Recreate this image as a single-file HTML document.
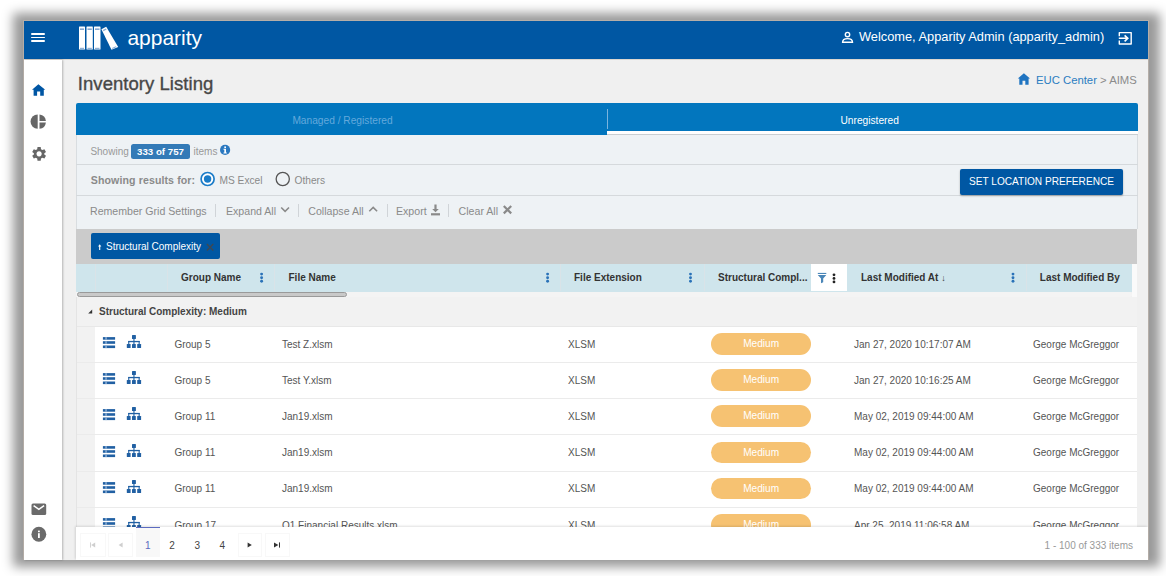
<!DOCTYPE html>
<html><head><meta charset="utf-8">
<style>
*{box-sizing:border-box;margin:0;padding:0}
html,body{width:1166px;height:576px;overflow:hidden;background:#fff;font-family:"Liberation Sans",sans-serif;}
.a{position:absolute}
.t{position:absolute;white-space:nowrap;line-height:1}
.shd{left:12.5px;top:13px;width:1147px;height:554px;background:rgba(0,0,0,0.4);filter:blur(5.5px)}
.win{left:23px;top:20px;width:1126px;height:540px;background:#f0f0f0;border:1px solid #b5aea8;border-bottom:none}
.hdr{left:24px;top:21px;width:1124px;height:38px;background:#0057a3;box-shadow:0 1px 0 #dcd6d0}
.side{left:24px;top:60px;width:38px;height:500px;background:#fff;box-shadow:1px 0 2px rgba(0,0,0,0.25)}
.tabs{left:76px;top:103px;width:1062px;height:32px;background:#0276be}
.panel{left:76px;top:135px;width:1062px;height:94px;background:#eef2f5;border-left:1px solid #d9dde0;border-right:1px solid #d9dde0}
.hline{position:absolute;height:1px;background:#d5d9dc}
.vsep{position:absolute;width:1px;height:13px;top:204px;background:#d0d4d8}
.tb{font-size:10.6px;color:#8a8a8a;top:206px}
.grp{left:76px;top:229px;width:1061px;height:35px;background:#cbcbcb}
.colh{left:76px;top:264px;width:1056px;height:27.8px;background:#cfe5ec}
.csep{position:absolute;top:264px;width:1px;height:27px;background:#d9e3e8}
.hd{top:273px;font-size:10px;font-weight:bold;color:#333}
.keb{position:absolute;top:273px;width:3px;height:10px}
.keb i{position:absolute;left:0;width:3px;height:3px;border-radius:50%;background:#2f7bc1}
.rt{font-size:10px;color:#555}
.badge{position:absolute;width:100.2px;height:21.5px;border-radius:11px;background:#f6c272;color:#fff;font-size:10.1px;text-align:center;line-height:21.5px}
</style></head><body>
<div class="a shd"></div>
<div class="a win"></div>
<div class="a hdr"></div>
<div class="a side"></div>
<!-- header -->
<div class="a" style="left:31.2px;top:33.4px;width:13.6px;height:1.7px;background:#fff;border-radius:1px"></div>
<div class="a" style="left:31.2px;top:36.7px;width:13.6px;height:1.7px;background:#fff;border-radius:1px"></div>
<div class="a" style="left:31.2px;top:40.2px;width:13.6px;height:1.7px;background:#fff;border-radius:1px"></div>
<svg class="a" style="left:0;top:0" width="1166" height="60" viewBox="0 0 1166 60">
 <g fill="#fff">
  <rect x="79" y="26.6" width="6" height="23" rx="0.5"/>
  <rect x="86.5" y="26.6" width="6.3" height="23" rx="0.5"/>
  <rect x="94" y="26.6" width="6.5" height="23" rx="0.5"/>
  <polygon points="101.4,29.3 106.2,26.7 118.2,47.1 111.5,49.7"/>
 </g>
 <g fill="#86aad3">
  <rect x="80" y="28.4" width="4" height="1.6"/><rect x="87.5" y="28.4" width="4.3" height="1.6"/><rect x="95" y="28.4" width="4.5" height="1.6"/>
  <rect x="80" y="47.8" width="4" height="1.1"/><rect x="87.5" y="47.8" width="4.3" height="1.1"/><rect x="95" y="47.8" width="4.5" height="1.1"/>
  <polygon points="102.8,30.1 105.9,28.5 106.6,29.6 103.5,31.2"/>
  <polygon points="112,48 115.9,46.2 116.4,47.1 112.5,48.9"/>
 </g>
 <g fill="none" stroke="#fff" stroke-width="1.4">
  <circle cx="847.5" cy="34.6" r="2.2"/>
  <path d="M842.6,42.2 L852.5,42.2 C852.5,40 850.5,38.6 847.55,38.6 C844.6,38.6 842.6,40 842.6,42.2 Z"/>
  <path d="M1119.3,36.3 V32.6 H1131.2 V44 H1119.3 V40.4" stroke-linejoin="round"/>
  <path d="M1118.8,38.3 H1127.6 M1124.6,35.3 L1127.8,38.3 L1124.6,41.3" stroke-width="1.6"/>
 </g>
</svg>
<div class="t" style="left:127.4px;top:27px;font-size:21px;color:#fff">apparity</div>
<div class="t" style="left:859px;top:31px;font-size:12.8px;color:#fff">Welcome, Apparity Admin (apparity_admin)</div>
<!-- sidebar icons -->
<svg class="a" style="left:0;top:60px" width="62" height="500" viewBox="0 60 62 500">
 <path d="M38.4,84.2 L45.2,89.8 L43.8,89.8 L43.8,95.8 L40.2,95.8 L40.2,91.5 L37.1,91.5 L37.1,95.8 L33.6,95.8 L33.6,89.8 L32,89.8 Z" fill="#0056a4"/>
 <g fill="#666">
  <path d="M37.7,114.5 A7.15,7.15 0 0 0 37.7,128.8 Z"/>
  <path d="M39.5,114.6 A7.15,7.15 0 0 1 45.9,121.1 L39.5,121.1 Z"/>
  <path d="M39.5,122.4 L45.9,122.4 A7.15,7.15 0 0 1 39.5,128.7 Z"/>
 </g>
 <g transform="translate(39.1,153.9)" fill="#666">
  <path id="gear" fill-rule="evenodd" d="M-1.6,-6.8 L1.6,-6.8 L1.9,-4.6 L3.3,-3.8 L5.3,-4.7 L6.9,-1.9 L5.2,-0.6 L5.2,0.6 L6.9,1.9 L5.3,4.7 L3.3,3.8 L1.9,4.6 L1.6,6.8 L-1.6,6.8 L-1.9,4.6 L-3.3,3.8 L-5.3,4.7 L-6.9,1.9 L-5.2,0.6 L-5.2,-0.6 L-6.9,-1.9 L-5.3,-4.7 L-3.3,-3.8 L-1.9,-4.6 Z M0,-2.6 A2.6,2.6 0 1 0 0.01,-2.6 Z"/>
 </g>
 <rect x="31.5" y="503.4" width="14.7" height="11.7" rx="1.5" fill="#6a6a6a"/>
 <path d="M33.6,505.6 L38.85,509.3 L44.1,505.6" fill="none" stroke="#fff" stroke-width="1.5"/>
 <circle cx="38.85" cy="534.25" r="7.4" fill="#6a6a6a"/>
 <rect x="38" y="530.6" width="1.8" height="1.6" fill="#fff"/>
 <rect x="38" y="533.2" width="1.8" height="4.8" fill="#fff"/>
</svg>

<!-- title & breadcrumb -->
<div class="t" style="left:77.8px;top:75px;font-size:18.5px;color:#474747;-webkit-text-stroke:0.35px #474747;letter-spacing:0.05px">Inventory Listing</div>
<svg class="a" style="left:1016px;top:72px" width="16" height="14" viewBox="1016 72 16 14">
 <path d="M1023.9,73.3 L1030,78.6 L1028.6,78.6 L1028.6,84.7 L1025.3,84.7 L1025.3,80.8 L1022.5,80.8 L1022.5,84.7 L1019.3,84.7 L1019.3,78.6 L1017.8,78.6 Z" fill="#1f74c1"/>
</svg>
<div class="t" style="left:1036px;top:74.9px;font-size:11.3px;color:#2b7dc1">EUC Center <span style="color:#8b8b8b">&gt; AIMS</span></div>
<!-- tabs -->
<div class="a tabs" style="border-radius:2px 2px 0 0"></div>
<div class="a" style="left:606.5px;top:108.6px;width:1px;height:20px;background:#7ab4de"></div>
<div class="a" style="left:607px;top:131.2px;width:531px;height:3.2px;background:#fff"></div><div class="a" style="left:607px;top:134.4px;width:531px;height:0.8px;background:#c9ced2"></div>
<div class="t" style="left:77px;width:531px;text-align:center;top:116.1px;font-size:10.2px;color:#62a9dc">Managed / Registered</div>
<div class="t" style="left:604.2px;width:531px;text-align:center;top:115.9px;font-size:10.2px;color:#fff">Unregistered</div>
<!-- panel -->
<div class="a panel"></div>
<div class="hline" style="left:76px;top:164.2px;width:1062px"></div>
<div class="hline" style="left:76px;top:195.3px;width:1062px"></div>
<div class="t" style="left:90.4px;top:146.5px;font-size:10px;color:#999">Showing</div>
<div class="a" style="left:131px;top:144px;width:59px;height:15px;background:#337ab7;border-radius:2.5px"></div>
<div class="t" style="left:131px;width:59px;text-align:center;top:147.3px;font-size:9.7px;font-weight:bold;color:#fff">333 of 757</div>
<div class="t" style="left:193.5px;top:146.5px;font-size:10px;color:#999">items</div>
<svg class="a" style="left:219px;top:144px" width="12" height="12" viewBox="219 144 12 12">
 <circle cx="225.1" cy="149.9" r="5.1" fill="#2a78c0"/>
 <rect x="224.3" y="146.4" width="1.7" height="1.6" fill="#fff"/>
 <path d="M223.5,148.7 H226 V152.4 H226.8 V153.4 H223.5 V152.4 H224.3 V149.7 H223.5 Z" fill="#fff"/>
</svg>
<div class="t" style="left:90.8px;top:174.5px;font-size:10.6px;font-weight:bold;color:#8a8a8a;letter-spacing:0.1px">Showing results for:</div>
<svg class="a" style="left:196px;top:168px" width="100" height="22" viewBox="196 168 100 22">
 <circle cx="207.6" cy="179" r="6.5" fill="#fff" stroke="#1b7cc8" stroke-width="1.7"/>
 <circle cx="207.6" cy="179" r="3.7" fill="#1b7cc8"/>
 <circle cx="282.75" cy="179" r="6.6" fill="none" stroke="#555" stroke-width="1.3"/>
</svg>
<div class="t" style="left:219.5px;top:176px;font-size:10.2px;color:#8a8a8a">MS Excel</div>
<div class="t" style="left:294.5px;top:176px;font-size:10.2px;color:#8a8a8a">Others</div>
<div class="a" style="left:960px;top:169px;width:163px;height:25.5px;background:#0057a3;border-radius:2px;box-shadow:0 1px 2px rgba(0,0,0,0.3)"></div>
<div class="t" style="left:960px;width:163px;text-align:center;top:177px;font-size:10.1px;color:#fff">SET LOCATION PREFERENCE</div>
<div class="t tb" style="left:90px">Remember Grid Settings</div>
<div class="vsep" style="left:215px"></div>
<div class="t tb" style="left:226px">Expand All</div>
<svg class="a" style="left:279px;top:204px" width="12" height="12" viewBox="279 204 12 12"><path d="M281.2,207.5 L285.1,211.3 L289,207.5" fill="none" stroke="#8a8a8a" stroke-width="1.6"/></svg>
<div class="vsep" style="left:297.5px"></div>
<div class="t tb" style="left:308.3px">Collapse All</div>
<svg class="a" style="left:367px;top:204px" width="12" height="12" viewBox="367 204 12 12"><path d="M369.3,211.2 L373.2,207.4 L377.1,211.2" fill="none" stroke="#8a8a8a" stroke-width="1.6"/></svg>
<div class="vsep" style="left:386.5px"></div>
<div class="t tb" style="left:396px">Export</div>
<svg class="a" style="left:430px;top:203px" width="12" height="14" viewBox="430 203 12 14">
 <path d="M434.4,204.5 H436.6 V209 H438.8 L435.5,212.3 L432.2,209 H434.4 Z" fill="#8a8a8a"/>
 <rect x="431" y="213.2" width="9" height="2.2" fill="#8a8a8a"/>
</svg>
<div class="vsep" style="left:448.3px"></div>
<div class="t tb" style="left:458.6px">Clear All</div>
<svg class="a" style="left:502px;top:204px" width="12" height="12" viewBox="502 204 12 12"><path d="M503.8,206 L511.2,213.4 M511.2,206 L503.8,213.4" fill="none" stroke="#8a8a8a" stroke-width="2.2"/></svg>

<!-- group panel -->
<div class="a grp"></div>
<div class="a" style="left:91.4px;top:233.3px;width:128.3px;height:25.5px;background:#0057a3;border-radius:2px"></div>
<svg class="a" style="left:95px;top:240px" width="10" height="12" viewBox="95 240 10 12"><path d="M99.7,250 V246" stroke="#fff" stroke-width="1.1"/><path d="M98.1,246.6 L99.7,244.2 L101.3,246.6 Z" fill="#fff"/></svg>
<div class="t" style="left:106px;top:242px;font-size:10px;color:#fff">Structural Complexity</div>
<svg class="a" style="left:204px;top:242px" width="12" height="12" viewBox="204 242 12 12"><path d="M206.9,244.1 L213.3,250.5 M213.3,244.1 L206.9,250.5" stroke="#404850" stroke-width="1.4"/></svg>
<!-- column header -->
<div class="a colh"></div>
<div class="a" style="left:810.9px;top:264px;width:36.2px;height:27px;background:#fff"></div>
<div class="csep" style="left:95.0px"></div>
<div class="csep" style="left:167.0px"></div>
<div class="csep" style="left:273.7px"></div>
<div class="csep" style="left:560.1px"></div>
<div class="csep" style="left:703.6px"></div>
<div class="csep" style="left:1026.1px"></div>
<div class="t hd" style="left:181px;top:272.6px">Group Name</div>
<div class="t hd" style="left:288.5px;top:272.6px">File Name</div>
<div class="t hd" style="left:574px;top:272.6px">File Extension</div>
<div class="t hd" style="left:718px;top:272.6px;">Structural Compl...</div>
<div class="t hd" style="left:861px;top:272.6px">Last Modified At <span style="font-weight:normal;font-size:9px">&#8595;</span></div>
<div class="t hd" style="left:1039.8px;top:272.6px">Last Modified By</div>
<svg class="a" style="left:0;top:264px" width="1166" height="28" viewBox="0 264 1166 28">
<g fill="#2a72b8"><circle cx="261.6" cy="274.1" r="1.45"/><circle cx="261.6" cy="277.75" r="1.45"/><circle cx="261.6" cy="281.3" r="1.45"/></g>
<g fill="#2a72b8"><circle cx="547.6" cy="274.1" r="1.45"/><circle cx="547.6" cy="277.75" r="1.45"/><circle cx="547.6" cy="281.3" r="1.45"/></g>
<g fill="#2a72b8"><circle cx="690.5" cy="274.1" r="1.45"/><circle cx="690.5" cy="277.75" r="1.45"/><circle cx="690.5" cy="281.3" r="1.45"/></g>
<g fill="#2a72b8"><circle cx="1013" cy="274.1" r="1.45"/><circle cx="1013" cy="277.75" r="1.45"/><circle cx="1013" cy="281.3" r="1.45"/></g>
<g fill="#222"><circle cx="834" cy="274.8" r="1.4"/><circle cx="834" cy="278.4" r="1.4"/><circle cx="834" cy="281.9" r="1.4"/></g>
</svg>
<svg class="a" style="left:816px;top:272px" width="12" height="13" viewBox="816 272 12 13">
 <rect x="817.8" y="272.9" width="8.5" height="1.1" fill="#4a86b8"/>
 <path d="M817.8,274.9 H826.3 L823.2,278.6 V282.2 L821,283.3 V278.6 Z" fill="#4a86b8"/>
</svg>
<!-- scrollbar -->
<div class="a" style="left:76px;top:291.8px;width:1056px;height:5.2px;background:#f4f4f4;border-radius:0 3px 3px 0"></div>
<div class="a" style="left:76.6px;top:291.9px;width:270.8px;height:4.8px;background:#c9c9c9;border:1px solid #9a9a9a;border-radius:3px"></div>
<div class="a" style="left:1131.5px;top:264px;width:5.5px;height:33px;background:#fafafa"></div>
<!-- grid body -->
<div class="a" style="left:76px;top:297px;width:1px;height:230px;background:#e4e4e4"></div>
<div class="a" style="left:77px;top:297px;width:1060px;height:29.8px;background:#f2f2f2;border-bottom:1px solid #e8e8e8"></div>
<svg class="a" style="left:86px;top:307px" width="8" height="8" viewBox="86 307 8 8"><path d="M92.2,309.4 V313.4 H88.2 Z" fill="#333"/></svg>
<div class="t" style="left:99px;top:306.7px;font-size:10px;font-weight:bold;color:#444">Structural Complexity: Medium</div>
<div class="a" style="left:77px;top:326.8px;width:1060px;height:36.2px;background:#fff;border-bottom:1px solid #ebebeb"></div>
<div class="a" style="left:77px;top:326.8px;width:18px;height:35.2px;background:#f2f2f2"></div>
<svg class="a" style="left:100px;top:332.0px" width="45" height="26" viewBox="100 332 45 26"><g fill="#2160a3">
 <rect x="102.9" y="337.1" width="12.2" height="2.6"/><rect x="102.9" y="341.2" width="12.2" height="2.6"/><rect x="102.9" y="345.5" width="12.2" height="2.6"/>
 <g fill="#9dbbdc"><rect x="105.4" y="337.1" width="1.3" height="2.6"/><rect x="105.4" y="341.2" width="1.3" height="2.6"/><rect x="105.4" y="345.5" width="1.3" height="2.6"/></g>
 <rect x="132" y="335" width="3.9" height="4" rx="0.5"/><rect x="133.4" y="339" width="1.1" height="2.2"/>
 <rect x="128.2" y="340.9" width="11.5" height="1.3"/><rect x="128.2" y="341" width="1.1" height="3.2"/><rect x="133.4" y="341" width="1.1" height="3.2"/><rect x="138.6" y="341" width="1.1" height="3.2"/>
 <rect x="126.8" y="344" width="3.8" height="3.9" rx="0.5"/><rect x="132" y="344" width="3.8" height="3.9" rx="0.5"/><rect x="137.2" y="344" width="3.9" height="3.9" rx="0.5"/>
</g></svg>
<div class="t rt" style="left:174.4px;top:339.6px">Group 5</div>
<div class="t rt" style="left:282px;top:339.6px">Test Z.xlsm</div>
<div class="t rt" style="left:568px;top:339.6px">XLSM</div>
<div class="badge" style="left:711px;top:333.0px">Medium</div>
<div class="t rt" style="left:854px;top:339.6px">Jan 27, 2020 10:17:07 AM</div>
<div class="t rt" style="left:1033px;top:339.6px">George McGreggor</div>
<div class="a" style="left:77px;top:363.0px;width:1060px;height:36.2px;background:#fff;border-bottom:1px solid #ebebeb"></div>
<div class="a" style="left:77px;top:363.0px;width:18px;height:35.2px;background:#f2f2f2"></div>
<svg class="a" style="left:100px;top:368.2px" width="45" height="26" viewBox="100 332 45 26"><g fill="#2160a3">
 <rect x="102.9" y="337.1" width="12.2" height="2.6"/><rect x="102.9" y="341.2" width="12.2" height="2.6"/><rect x="102.9" y="345.5" width="12.2" height="2.6"/>
 <g fill="#9dbbdc"><rect x="105.4" y="337.1" width="1.3" height="2.6"/><rect x="105.4" y="341.2" width="1.3" height="2.6"/><rect x="105.4" y="345.5" width="1.3" height="2.6"/></g>
 <rect x="132" y="335" width="3.9" height="4" rx="0.5"/><rect x="133.4" y="339" width="1.1" height="2.2"/>
 <rect x="128.2" y="340.9" width="11.5" height="1.3"/><rect x="128.2" y="341" width="1.1" height="3.2"/><rect x="133.4" y="341" width="1.1" height="3.2"/><rect x="138.6" y="341" width="1.1" height="3.2"/>
 <rect x="126.8" y="344" width="3.8" height="3.9" rx="0.5"/><rect x="132" y="344" width="3.8" height="3.9" rx="0.5"/><rect x="137.2" y="344" width="3.9" height="3.9" rx="0.5"/>
</g></svg>
<div class="t rt" style="left:174.4px;top:375.8px">Group 5</div>
<div class="t rt" style="left:282px;top:375.8px">Test Y.xlsm</div>
<div class="t rt" style="left:568px;top:375.8px">XLSM</div>
<div class="badge" style="left:711px;top:369.2px">Medium</div>
<div class="t rt" style="left:854px;top:375.8px">Jan 27, 2020 10:16:25 AM</div>
<div class="t rt" style="left:1033px;top:375.8px">George McGreggor</div>
<div class="a" style="left:77px;top:399.2px;width:1060px;height:36.2px;background:#fff;border-bottom:1px solid #ebebeb"></div>
<div class="a" style="left:77px;top:399.2px;width:18px;height:35.2px;background:#f2f2f2"></div>
<svg class="a" style="left:100px;top:404.4px" width="45" height="26" viewBox="100 332 45 26"><g fill="#2160a3">
 <rect x="102.9" y="337.1" width="12.2" height="2.6"/><rect x="102.9" y="341.2" width="12.2" height="2.6"/><rect x="102.9" y="345.5" width="12.2" height="2.6"/>
 <g fill="#9dbbdc"><rect x="105.4" y="337.1" width="1.3" height="2.6"/><rect x="105.4" y="341.2" width="1.3" height="2.6"/><rect x="105.4" y="345.5" width="1.3" height="2.6"/></g>
 <rect x="132" y="335" width="3.9" height="4" rx="0.5"/><rect x="133.4" y="339" width="1.1" height="2.2"/>
 <rect x="128.2" y="340.9" width="11.5" height="1.3"/><rect x="128.2" y="341" width="1.1" height="3.2"/><rect x="133.4" y="341" width="1.1" height="3.2"/><rect x="138.6" y="341" width="1.1" height="3.2"/>
 <rect x="126.8" y="344" width="3.8" height="3.9" rx="0.5"/><rect x="132" y="344" width="3.8" height="3.9" rx="0.5"/><rect x="137.2" y="344" width="3.9" height="3.9" rx="0.5"/>
</g></svg>
<div class="t rt" style="left:174.4px;top:412.0px">Group 11</div>
<div class="t rt" style="left:282px;top:412.0px">Jan19.xlsm</div>
<div class="t rt" style="left:568px;top:412.0px">XLSM</div>
<div class="badge" style="left:711px;top:405.4px">Medium</div>
<div class="t rt" style="left:854px;top:412.0px">May 02, 2019 09:44:00 AM</div>
<div class="t rt" style="left:1033px;top:412.0px">George McGreggor</div>
<div class="a" style="left:77px;top:435.4px;width:1060px;height:36.2px;background:#fff;border-bottom:1px solid #ebebeb"></div>
<div class="a" style="left:77px;top:435.4px;width:18px;height:35.2px;background:#f2f2f2"></div>
<svg class="a" style="left:100px;top:440.6px" width="45" height="26" viewBox="100 332 45 26"><g fill="#2160a3">
 <rect x="102.9" y="337.1" width="12.2" height="2.6"/><rect x="102.9" y="341.2" width="12.2" height="2.6"/><rect x="102.9" y="345.5" width="12.2" height="2.6"/>
 <g fill="#9dbbdc"><rect x="105.4" y="337.1" width="1.3" height="2.6"/><rect x="105.4" y="341.2" width="1.3" height="2.6"/><rect x="105.4" y="345.5" width="1.3" height="2.6"/></g>
 <rect x="132" y="335" width="3.9" height="4" rx="0.5"/><rect x="133.4" y="339" width="1.1" height="2.2"/>
 <rect x="128.2" y="340.9" width="11.5" height="1.3"/><rect x="128.2" y="341" width="1.1" height="3.2"/><rect x="133.4" y="341" width="1.1" height="3.2"/><rect x="138.6" y="341" width="1.1" height="3.2"/>
 <rect x="126.8" y="344" width="3.8" height="3.9" rx="0.5"/><rect x="132" y="344" width="3.8" height="3.9" rx="0.5"/><rect x="137.2" y="344" width="3.9" height="3.9" rx="0.5"/>
</g></svg>
<div class="t rt" style="left:174.4px;top:448.2px">Group 11</div>
<div class="t rt" style="left:282px;top:448.2px">Jan19.xlsm</div>
<div class="t rt" style="left:568px;top:448.2px">XLSM</div>
<div class="badge" style="left:711px;top:441.6px">Medium</div>
<div class="t rt" style="left:854px;top:448.2px">May 02, 2019 09:44:00 AM</div>
<div class="t rt" style="left:1033px;top:448.2px">George McGreggor</div>
<div class="a" style="left:77px;top:471.6px;width:1060px;height:36.2px;background:#fff;border-bottom:1px solid #ebebeb"></div>
<div class="a" style="left:77px;top:471.6px;width:18px;height:35.2px;background:#f2f2f2"></div>
<svg class="a" style="left:100px;top:476.8px" width="45" height="26" viewBox="100 332 45 26"><g fill="#2160a3">
 <rect x="102.9" y="337.1" width="12.2" height="2.6"/><rect x="102.9" y="341.2" width="12.2" height="2.6"/><rect x="102.9" y="345.5" width="12.2" height="2.6"/>
 <g fill="#9dbbdc"><rect x="105.4" y="337.1" width="1.3" height="2.6"/><rect x="105.4" y="341.2" width="1.3" height="2.6"/><rect x="105.4" y="345.5" width="1.3" height="2.6"/></g>
 <rect x="132" y="335" width="3.9" height="4" rx="0.5"/><rect x="133.4" y="339" width="1.1" height="2.2"/>
 <rect x="128.2" y="340.9" width="11.5" height="1.3"/><rect x="128.2" y="341" width="1.1" height="3.2"/><rect x="133.4" y="341" width="1.1" height="3.2"/><rect x="138.6" y="341" width="1.1" height="3.2"/>
 <rect x="126.8" y="344" width="3.8" height="3.9" rx="0.5"/><rect x="132" y="344" width="3.8" height="3.9" rx="0.5"/><rect x="137.2" y="344" width="3.9" height="3.9" rx="0.5"/>
</g></svg>
<div class="t rt" style="left:174.4px;top:484.4px">Group 11</div>
<div class="t rt" style="left:282px;top:484.4px">Jan19.xlsm</div>
<div class="t rt" style="left:568px;top:484.4px">XLSM</div>
<div class="badge" style="left:711px;top:477.8px">Medium</div>
<div class="t rt" style="left:854px;top:484.4px">May 02, 2019 09:44:00 AM</div>
<div class="t rt" style="left:1033px;top:484.4px">George McGreggor</div>
<div class="a" style="left:77px;top:507.8px;width:1060px;height:36.2px;background:#fff;border-bottom:1px solid #ebebeb"></div>
<div class="a" style="left:77px;top:507.8px;width:18px;height:35.2px;background:#f2f2f2"></div>
<svg class="a" style="left:100px;top:513.0px" width="45" height="26" viewBox="100 332 45 26"><g fill="#2160a3">
 <rect x="102.9" y="337.1" width="12.2" height="2.6"/><rect x="102.9" y="341.2" width="12.2" height="2.6"/><rect x="102.9" y="345.5" width="12.2" height="2.6"/>
 <g fill="#9dbbdc"><rect x="105.4" y="337.1" width="1.3" height="2.6"/><rect x="105.4" y="341.2" width="1.3" height="2.6"/><rect x="105.4" y="345.5" width="1.3" height="2.6"/></g>
 <rect x="132" y="335" width="3.9" height="4" rx="0.5"/><rect x="133.4" y="339" width="1.1" height="2.2"/>
 <rect x="128.2" y="340.9" width="11.5" height="1.3"/><rect x="128.2" y="341" width="1.1" height="3.2"/><rect x="133.4" y="341" width="1.1" height="3.2"/><rect x="138.6" y="341" width="1.1" height="3.2"/>
 <rect x="126.8" y="344" width="3.8" height="3.9" rx="0.5"/><rect x="132" y="344" width="3.8" height="3.9" rx="0.5"/><rect x="137.2" y="344" width="3.9" height="3.9" rx="0.5"/>
</g></svg>
<div class="t rt" style="left:174.4px;top:520.6px">Group 17</div>
<div class="t rt" style="left:282px;top:520.6px">Q1 Financial Results.xlsm</div>
<div class="t rt" style="left:568px;top:520.6px">XLSM</div>
<div class="badge" style="left:711px;top:514.0px">Medium</div>
<div class="t rt" style="left:854px;top:520.6px">Apr 25, 2019 11:06:58 AM</div>
<div class="t rt" style="left:1033px;top:520.6px">George McGreggor</div>
<!-- pager -->
<div class="a" style="left:76px;top:526.8px;width:1072px;height:33.2px;background:#fff;box-shadow:-1px -1px 2px rgba(0,0,0,0.12)"></div>
<div class="a" style="left:80px;top:532.5px;width:25.5px;height:24.5px;border:1px solid #f8f8f8"></div>
<div class="a" style="left:107.5px;top:532.5px;width:25.5px;height:24.5px;border:1px solid #f8f8f8"></div>
<div class="a" style="left:135.5px;top:528px;width:24px;height:29px;background:#f8f8f8"></div>
<div class="a" style="left:135.5px;top:527px;width:24px;height:1.2px;background:#5c6bc0"></div>
<div class="a" style="left:237.5px;top:532.5px;width:24.5px;height:24.5px;border:1px solid #f8f8f8"></div>
<div class="a" style="left:264.5px;top:532.5px;width:25px;height:24.5px;border:1px solid #f8f8f8"></div>
<svg class="a" style="left:85px;top:538px" width="200" height="14" viewBox="85 538 200 14">
 <rect x="90" y="542.4" width="0.9" height="5.2" fill="#cfcfcf"/><path d="M95.2,542.4 V547.6 L91.2,545 Z" fill="#cfcfcf"/>
 <path d="M122.6,542.4 V547.6 L118.6,545 Z" fill="#cfcfcf"/>
 <path d="M247.6,542.4 V547.6 L251.8,545 Z" fill="#333"/>
 <path d="M274,542.4 V547.6 L278.4,545 Z" fill="#333"/><rect x="279" y="542.4" width="1" height="5.2" fill="#333"/>
</svg>
<div class="t" style="left:145px;top:540.5px;font-size:10px;color:#5c6bc0">1</div>
<div class="t" style="left:169.3px;top:540.5px;font-size:10px;color:#444">2</div>
<div class="t" style="left:194.6px;top:540.5px;font-size:10px;color:#444">3</div>
<div class="t" style="left:219.6px;top:540.5px;font-size:10px;color:#444">4</div>
<div class="t" style="left:1044.6px;top:540.6px;font-size:10px;color:#999">1 - 100 of 333 items</div>
</body></html>
